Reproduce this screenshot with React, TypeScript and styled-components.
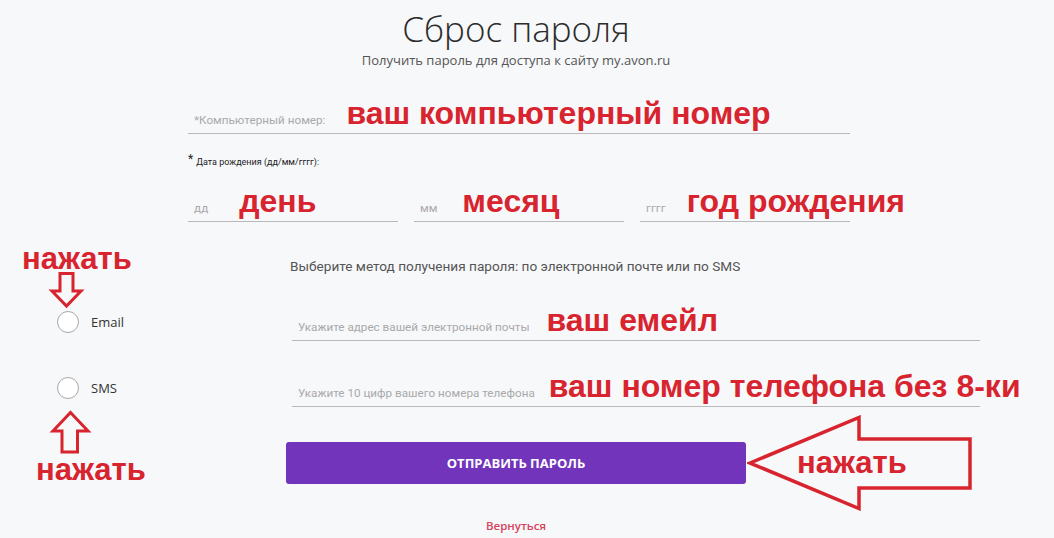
import styled, { createGlobalStyle } from "styled-components";

const GlobalStyle = createGlobalStyle`
  body {
    margin: 0;
    background: #f7f8fa;
    font-family: "Open Sans", "Liberation Sans", sans-serif;
  }
`;

const Page = styled.div`
  width: 1054px;
  height: 538px;
  overflow: hidden;
  background: #f7f8fa;
`;

const Header = styled.div`
  text-align: center;
  padding-top: 7px;
  padding-right: 22px;
`;

const Title = styled.h1`
  margin: 0;
  font-size: 35px;
  line-height: 44px;
  font-weight: 300;
  color: #2b2b2b;
`;

const Subtitle = styled.p`
  margin: 2px 0 0;
  font-size: 13px;
  line-height: 15px;
  color: #555;
`;

const TopForm = styled.div`
  width: 662px;
  margin-left: 188px;
  margin-top: 27px;
`;

const Field = styled.div<{ $width?: number; $indent?: number }>`
  display: flex;
  align-items: baseline;
  width: ${(p) => (p.$width ? `${p.$width}px` : "auto")};
  margin-left: ${(p) => p.$indent ?? 0}px;
  padding: 0 0 2px 6px;
  box-sizing: border-box;
  border-bottom: 1px solid #b9b9bc;
  white-space: nowrap;
`;

const Placeholder = styled.span`
  font-family: "Roboto", "Liberation Sans", sans-serif;
  font-size: 11.7px;
  color: #a9a9ab;
`;

const Note = styled.span<{ $gap?: number }>`
  font-family: "Liberation Sans", Arial, sans-serif;
  font-weight: 700;
  font-size: 32px;
  line-height: 36px;
  color: #d7242e;
  margin-left: ${(p) => p.$gap ?? 20}px;
`;

const DateLabel = styled.div`
  margin-top: 19px;
  font-family: "Roboto", "Liberation Sans", sans-serif;
  font-size: 9px;
  line-height: 12px;
  color: #222;

  span {
    font-size: 12px;
    vertical-align: 2px;
    margin-right: 3px;
  }
`;

const DateRow = styled.div`
  display: flex;
  gap: 16px;
  margin-top: 15px;
`;

const MethodSection = styled.div`
  display: grid;
  grid-template-columns: 286px 694px;
  margin-top: 23px;
`;

const ChoiceColumn = styled.div`
  display: flex;
  flex-direction: column;
  align-items: flex-start;
`;

const PressNote = styled.div<{ $left: number; $top: number }>`
  font-family: "Liberation Sans", Arial, sans-serif;
  font-weight: 700;
  font-size: 31px;
  line-height: 28px;
  color: #d7242e;
  margin-left: ${(p) => p.$left}px;
  margin-top: ${(p) => p.$top}px;
`;

const SmallArrow = styled.svg<{ $left: number; $top: number }>`
  display: block;
  margin-left: ${(p) => p.$left}px;
  margin-top: ${(p) => p.$top}px;
  overflow: visible;
`;

const RadioRow = styled.label<{ $top: number }>`
  display: flex;
  align-items: center;
  gap: 12px;
  margin-left: 57px;
  margin-top: ${(p) => p.$top}px;
  font-size: 13px;
  color: #333;
`;

const RadioCircle = styled.span`
  width: 20px;
  height: 20px;
  border-radius: 50%;
  border: 1px solid #a8a8a8;
  background: #fff;
`;

const MethodColumn = styled.div`
  display: flex;
  flex-direction: column;
  align-items: flex-start;
`;

const MethodHint = styled.p`
  margin: 13px 0 0 4px;
  font-family: "Roboto", "Liberation Sans", sans-serif;
  font-size: 13.6px;
  line-height: 16px;
  color: #555;
`;

const ContactField = styled(Field)<{ $top: number }>`
  width: 688px;
  margin-top: ${(p) => p.$top}px;
`;

const ActionRow = styled.div`
  display: flex;
  align-items: center;
  margin-top: 8px;
`;

const SubmitButton = styled.button`
  width: 460px;
  height: 42px;
  border: none;
  border-radius: 3px;
  background: #7134bb;
  color: #fff;
  font-family: "Open Sans", "Liberation Sans", sans-serif;
  font-weight: 700;
  font-size: 13px;
`;

const BigArrow = styled.div`
  position: relative;
  width: 226px;
  height: 96px;
  margin-left: 1px;
  display: flex;
  align-items: center;
  padding-left: 50px;
  box-sizing: border-box;

  svg {
    position: absolute;
    left: 0;
    top: 0;
  }
`;

const ArrowText = styled.span`
  position: relative;
  font-family: "Liberation Sans", Arial, sans-serif;
  font-weight: 700;
  font-size: 31px;
  color: #d7242e;
`;

const BackLink = styled.a`
  display: block;
  width: 460px;
  text-align: center;
  margin-top: 8px;
  font-size: 11.5px;
  line-height: 14px;
  font-weight: 600;
  color: #d6435c;
`;

const RED = "#d7242e";

const App = () => {
  return (
    <Page>
      <GlobalStyle />
      <Header>
        <Title>Сброс пароля</Title>
        <Subtitle>Получить пароль для доступа к сайту my.avon.ru</Subtitle>
      </Header>

      <TopForm>
        <Field>
          <Placeholder>*Компьютерный номер:</Placeholder>
          <Note $gap={21}>ваш компьютерный номер</Note>
        </Field>
        <DateLabel>
          <span>*</span>Дата рождения (дд/мм/гггг):
        </DateLabel>
        <DateRow>
          <Field $width={210}>
            <Placeholder>дд</Placeholder>
            <Note $gap={31}>день</Note>
          </Field>
          <Field $width={210}>
            <Placeholder>мм</Placeholder>
            <Note $gap={25}>месяц</Note>
          </Field>
          <Field $width={210}>
            <Placeholder>гггг</Placeholder>
            <Note $gap={21}>год рождения</Note>
          </Field>
        </DateRow>
      </TopForm>

      <MethodSection>
        <ChoiceColumn>
          <PressNote $left={22} $top={0}>нажать</PressNote>
          <SmallArrow $left={50} $top={-1} width="33" height="36" viewBox="0 0 33 36">
            <polygon
              points="10,1.5 23,1.5 23,19 31,19 16.5,34 2,19 10,19"
              fill="none"
              stroke={RED}
              strokeWidth="3"
            />
          </SmallArrow>
          <RadioRow $top={3}>
            <RadioCircle />
            Email
          </RadioRow>
          <RadioRow $top={44}>
            <RadioCircle />
            SMS
          </RadioRow>
          <SmallArrow $left={51} $top={11} width="39" height="44" viewBox="0 0 39 44">
            <polygon
              points="19.5,2.5 37,21 26.5,21 26.5,42 11,42 11,21 2,21"
              fill="none"
              stroke={RED}
              strokeWidth="3"
            />
          </SmallArrow>
          <PressNote $left={36} $top={2}>нажать</PressNote>
        </ChoiceColumn>

        <MethodColumn>
          <MethodHint>
            Выберите метод получения пароля: по электронной почте или по SMS
          </MethodHint>
          <ContactField $indent={6} $top={28}>
            <Placeholder>Укажите адрес вашей электронной почты</Placeholder>
            <Note $gap={17}>ваш емейл</Note>
          </ContactField>
          <ContactField $indent={6} $top={27}>
            <Placeholder>Укажите 10 цифр вашего номера телефона</Placeholder>
            <Note $gap={14}>ваш номер телефона без 8-ки</Note>
          </ContactField>
          <ActionRow>
            <SubmitButton>ОТПРАВИТЬ ПАРОЛЬ</SubmitButton>
            <BigArrow>
              <svg width="226" height="96" viewBox="0 0 226 96">
                <polygon
                  points="3,48 112,2.5 112,24 223,24 223,73 112,73 112,93.5"
                  fill="none"
                  stroke={RED}
                  strokeWidth="3.5"
                />
              </svg>
              <ArrowText>нажать</ArrowText>
            </BigArrow>
          </ActionRow>
          <BackLink>Вернуться</BackLink>
        </MethodColumn>
      </MethodSection>
    </Page>
  );
};

export default App;
